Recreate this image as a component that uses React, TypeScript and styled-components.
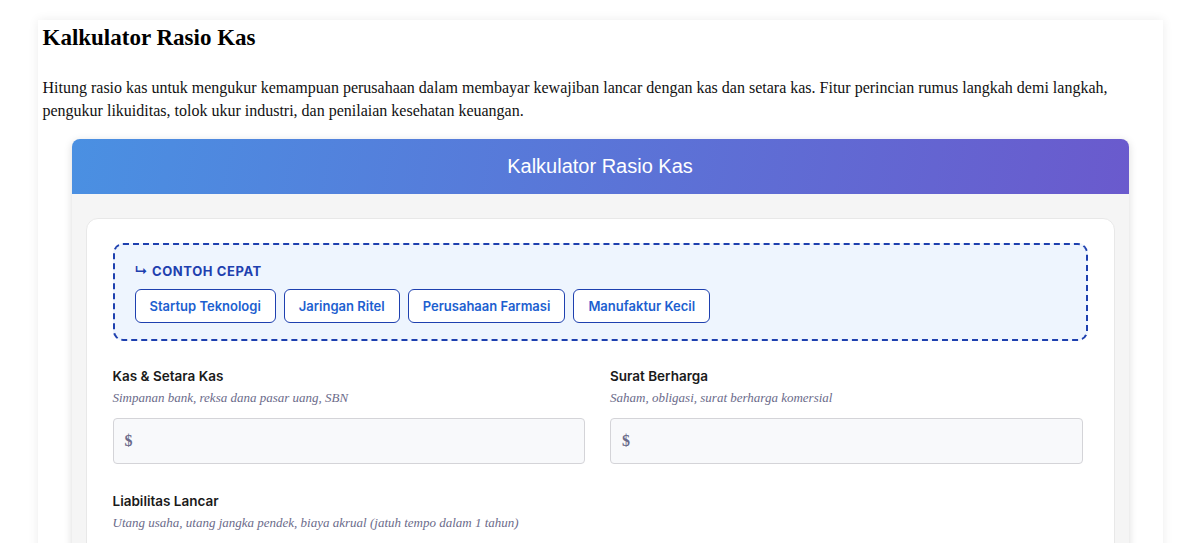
import React from "react";
import styled, { createGlobalStyle } from "styled-components";

const Global = createGlobalStyle`
  html { overflow-y: scroll; }
  html, body { margin: 0; padding: 0; background: #fff; }
  body { font-family: "Liberation Serif", serif; }
`;
const Page = styled.div`
  max-width: 1125px; margin: 20px auto 0; padding: 5px 5px 40px; box-sizing: border-box;
  box-shadow: 0 0 10px rgba(0,0,0,0.08); background: #fff;
`;
const Title = styled.h2`
  font-size: 23px; font-weight: bold; margin: 0 0 25px; line-height: 26px; color: #000;
`;
const Intro = styled.p`
  font-size: 16px; line-height: 23px; margin: 0 0 17px; color: #111;
`;
const Calc = styled.div`
  margin: 0 29px 0 29px; border-radius: 8px; overflow: hidden; background: #f5f5f5;
  box-shadow: 0 2px 8px rgba(0,0,0,0.15); padding-bottom: 200px;
`;
const Header = styled.div`
  height: 55px; display: flex; align-items: center; justify-content: center;
  background: linear-gradient(100deg, #4a90e2, #6a5acd);
  color: #fff; font-family: "Liberation Sans", Arial, sans-serif; font-size: 20px;
`;
const Inner = styled.div`
  margin: 24px 14px 0; background: #fff; border-radius: 12px; border: 1px solid #e8e8e8;
  padding: 24px 26px; font-family: Inter, "Noto Sans", sans-serif;
`;
const Quick = styled.div`
  border: 2px dashed #1e40af; border-radius: 10px; background: #eef5fe;
  padding: 18px 20px 16px;
`;
const QuickTitle = styled.div`
  color: #1e40af; font-size: 13px; font-weight: 700; letter-spacing: 0.6px; margin-bottom: 10px;
`;
const Btns = styled.div` display: flex; gap: 8px; `;
const Btn = styled.button`
  font-family: Inter, sans-serif; font-size: 13px; font-weight: 600; color: #1d5fd0;
  background: #fff; border: 1px solid #1e40af; border-radius: 6px; height: 34px; padding: 0 14px;
`;
const Grid = styled.div`
  display: grid; grid-template-columns: 1fr 1fr; gap: 28px 25px; margin-top: 26px; padding-right: 5px;
`;
const Field = styled.div``;
const Label = styled.div` font-size: 13.5px; font-weight: 600; color: #1a1a1a; line-height: 18px; `;
const Hint = styled.div`
  font-family: "Liberation Serif", serif; font-style: italic; font-size: 13px; color: #6b6b8a;
  margin-top: 5px; margin-bottom: 12px;
`;
const InputBox = styled.div`
  height: 46px; border: 1px solid #d4d4d8; border-radius: 4px; background: #f8f9fb;
  display: flex; align-items: center; padding-left: 11px; box-sizing: border-box;
  font-family: "Liberation Serif", serif; font-weight: bold; color: #6b6b8a; font-size: 16px;
`;

export default function App() {
  return (
    <>
      <Global />
      <Page>
        <Title>Kalkulator Rasio Kas</Title>
        <Intro>
          Hitung rasio kas untuk mengukur kemampuan perusahaan dalam membayar kewajiban lancar dengan kas dan setara kas. Fitur perincian rumus langkah demi langkah, pengukur likuiditas, tolok ukur industri, dan penilaian kesehatan keuangan.
        </Intro>
        <Calc>
          <Header>Kalkulator Rasio Kas</Header>
          <Inner>
            <Quick>
              <QuickTitle>↳ CONTOH CEPAT</QuickTitle>
              <Btns>
                <Btn>Startup Teknologi</Btn>
                <Btn>Jaringan Ritel</Btn>
                <Btn>Perusahaan Farmasi</Btn>
                <Btn>Manufaktur Kecil</Btn>
              </Btns>
            </Quick>
            <Grid>
              <Field>
                <Label>Kas &amp; Setara Kas</Label>
                <Hint>Simpanan bank, reksa dana pasar uang, SBN</Hint>
                <InputBox>$</InputBox>
              </Field>
              <Field>
                <Label>Surat Berharga</Label>
                <Hint>Saham, obligasi, surat berharga komersial</Hint>
                <InputBox>$</InputBox>
              </Field>
              <Field>
                <Label>Liabilitas Lancar</Label>
                <Hint>Utang usaha, utang jangka pendek, biaya akrual (jatuh tempo dalam 1 tahun)</Hint>
                <InputBox>$</InputBox>
              </Field>
            </Grid>
          </Inner>
        </Calc>
      </Page>
    </>
  );
}
